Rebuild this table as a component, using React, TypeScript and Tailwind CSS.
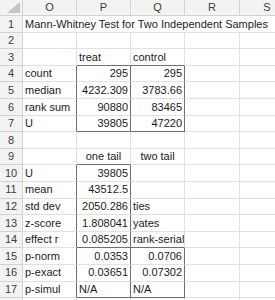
import React from "react";

type Cell = { t?: string; a?: "l" | "r" | "c"; r?: boolean; b?: boolean; span?: boolean };

const COLS = ["O", "P", "Q", "R", "S"];

// rows 1..17 (+ a sliver of 18), columns O..S
const ROWS: Cell[][] = [
  [{ t: "Mann-Whitney Test for Two Independent Samples", span: true }],
  [{}, {}, {}, {}, {}],
  [{}, { t: "treat", b: true }, { t: "control", b: true }, {}, {}],
  [{ t: "count", r: true }, { t: "295", a: "r", r: true }, { t: "295", a: "r", r: true }, {}, {}],
  [{ t: "median", r: true }, { t: "4232.309", a: "r", r: true }, { t: "3783.66", a: "r", r: true }, {}, {}],
  [{ t: "rank sum", r: true }, { t: "90880", a: "r", r: true }, { t: "83465", a: "r", r: true }, {}, {}],
  [{ t: "U", r: true }, { t: "39805", a: "r", r: true, b: true }, { t: "47220", a: "r", r: true, b: true }, {}, {}],
  [{}, {}, {}, {}, {}],
  [{}, { t: "one tail", a: "c", b: true }, { t: "two tail", a: "c" }, {}, {}],
  [{ t: "U", r: true }, { t: "39805", a: "r", r: true }, {}, {}, {}],
  [{ t: "mean", r: true }, { t: "43512.5", a: "r", r: true }, {}, {}, {}],
  [{ t: "std dev", r: true }, { t: "2050.286", a: "r", r: true }, { t: "ties" }, {}, {}],
  [{ t: "z-score", r: true }, { t: "1.808041", a: "r", r: true }, { t: "yates" }, {}, {}],
  [{ t: "effect r", r: true }, { t: "0.085205", a: "r", r: true, b: true }, { t: "rank-serial", b: true }, {}, {}],
  [{ t: "p-norm", r: true }, { t: "0.0353", a: "r", r: true }, { t: "0.0706", a: "r", r: true }, {}, {}],
  [{ t: "p-exact", r: true }, { t: "0.03651", a: "r", r: true }, { t: "0.07302", a: "r", r: true }, {}, {}],
  [{ t: "p-simul", r: true }, { t: "N/A", r: true, b: true }, { t: "N/A", r: true, b: true }, {}, {}],
  [{}, {}, {}, {}, {}],
];

function GridCell({ c }: { c: Cell }) {
  const align = c.a === "r" ? "justify-end" : c.a === "c" ? "justify-center" : "justify-start";
  const right = c.r ? "border-r-[#6e6e6e]" : "border-r-[#e1e1e1]";
  const bottom = c.b ? "border-b-[#6e6e6e]" : "border-b-[#e1e1e1]";
  return (
    <div
      className={`flex h-[16.6px] items-center overflow-visible whitespace-nowrap border-b border-r px-[2px] ${align} ${right} ${bottom} ${
        c.span ? "col-span-5" : ""
      }`}
    >
      {c.t}
    </div>
  );
}

export default function App() {
  return (
    <div
      className="h-[300px] w-[275px] overflow-hidden bg-white text-[11px] text-[#1a1a1a]"
      style={{ fontFamily: '"Liberation Sans", Arial, sans-serif' }}
    >
      <div className="grid w-[295px] grid-cols-[23px_54px_54px_54px_55px_55px]">
        {/* corner */}
        <div className="flex h-[16px] items-end justify-end border-b border-r border-[#d2d2d2] bg-[#f3f3f3] pb-[2px] pr-[2px]">
          <svg width="13" height="11" viewBox="0 0 13 11">
            <polygon points="13,0 13,11 0,11" fill="#c4c4c4" />
          </svg>
        </div>
        {COLS.map((l) => (
          <div
            key={l}
            className="flex h-[16px] items-center justify-center border-b border-r border-[#d2d2d2] bg-[#f3f3f3] text-[11px] text-[#3c3c3c]"
          >
            {l}
          </div>
        ))}
        {ROWS.map((row, i) => (
          <React.Fragment key={i}>
            <div className="flex h-[16.6px] items-center justify-center border-b border-r border-[#d2d2d2] bg-[#f3f3f3] text-[11px] text-[#3c3c3c]">
              {i < 17 ? i + 1 : ""}
            </div>
            {row.map((c, j) => (
              <GridCell key={j} c={c} />
            ))}
          </React.Fragment>
        ))}
      </div>
    </div>
  );
}
